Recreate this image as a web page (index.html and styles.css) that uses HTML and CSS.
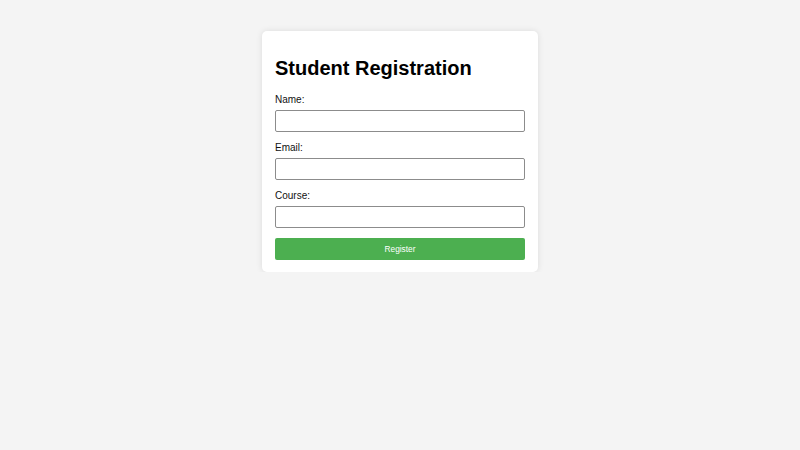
FILE: index.html
```html
<!DOCTYPE html>
<html lang="en">
<head>
  <meta charset="UTF-8">
  <meta name="viewport" content="width=device-width, initial-scale=1.0">
  <title>Student Registration</title>
  <link rel="stylesheet" href="styles.css">
</head>
<body>
  <div class="container">
    <h1>Student Registration</h1>
    <form id="registerForm">
      <label for="name">Name:</label>
      <input type="text" id="name" name="name">
      <label for="email">Email:</label>
      <input type="email" id="email" name="email">
      <label for="course">Course:</label>
      <input type="text" id="course" name="course">
      <button type="button">Register</button>
    </form>
  </div>
</body>
</html>
```

FILE: styles.css
```css
body {
  font-family: "Liberation Sans", Arial, sans-serif;
  background-color: #f4f4f4;
  margin: 0;
  padding: 31px 0 0;
}
.container {
  width: 250px;
  margin: 0 auto;
  background-color: #ffffff;
  padding: 0 13px 12px;
  border-radius: 5px;
  box-shadow: 0 0 6px rgba(0, 0, 0, 0.1);
  overflow: hidden;
}
h1 {
  font-size: 20px;
  line-height: 23px;
  color: #000;
  margin: 26px 0 14px;
}
form {
  display: flex;
  flex-direction: column;
}
label {
  display: block;
  font-size: 10px;
  line-height: 12px;
  color: #111;
  margin-bottom: 4px;
}
input {
  box-sizing: border-box;
  width: 250px;
  height: 22px;
  padding: 4px;
  margin: 0 0 10px;
  border: 1px solid #8c8c8c;
  border-radius: 2px;
  font-size: 10px;
}
button {
  width: 250px;
  height: 22px;
  padding: 0;
  border: none;
  border-radius: 2px;
  background-color: #4caf50;
  color: #ffffff;
  font-family: "Liberation Sans", Arial, sans-serif;
  font-size: 8.3px;
  cursor: pointer;
}
button:hover {
  background-color: #45a049;
}
```
